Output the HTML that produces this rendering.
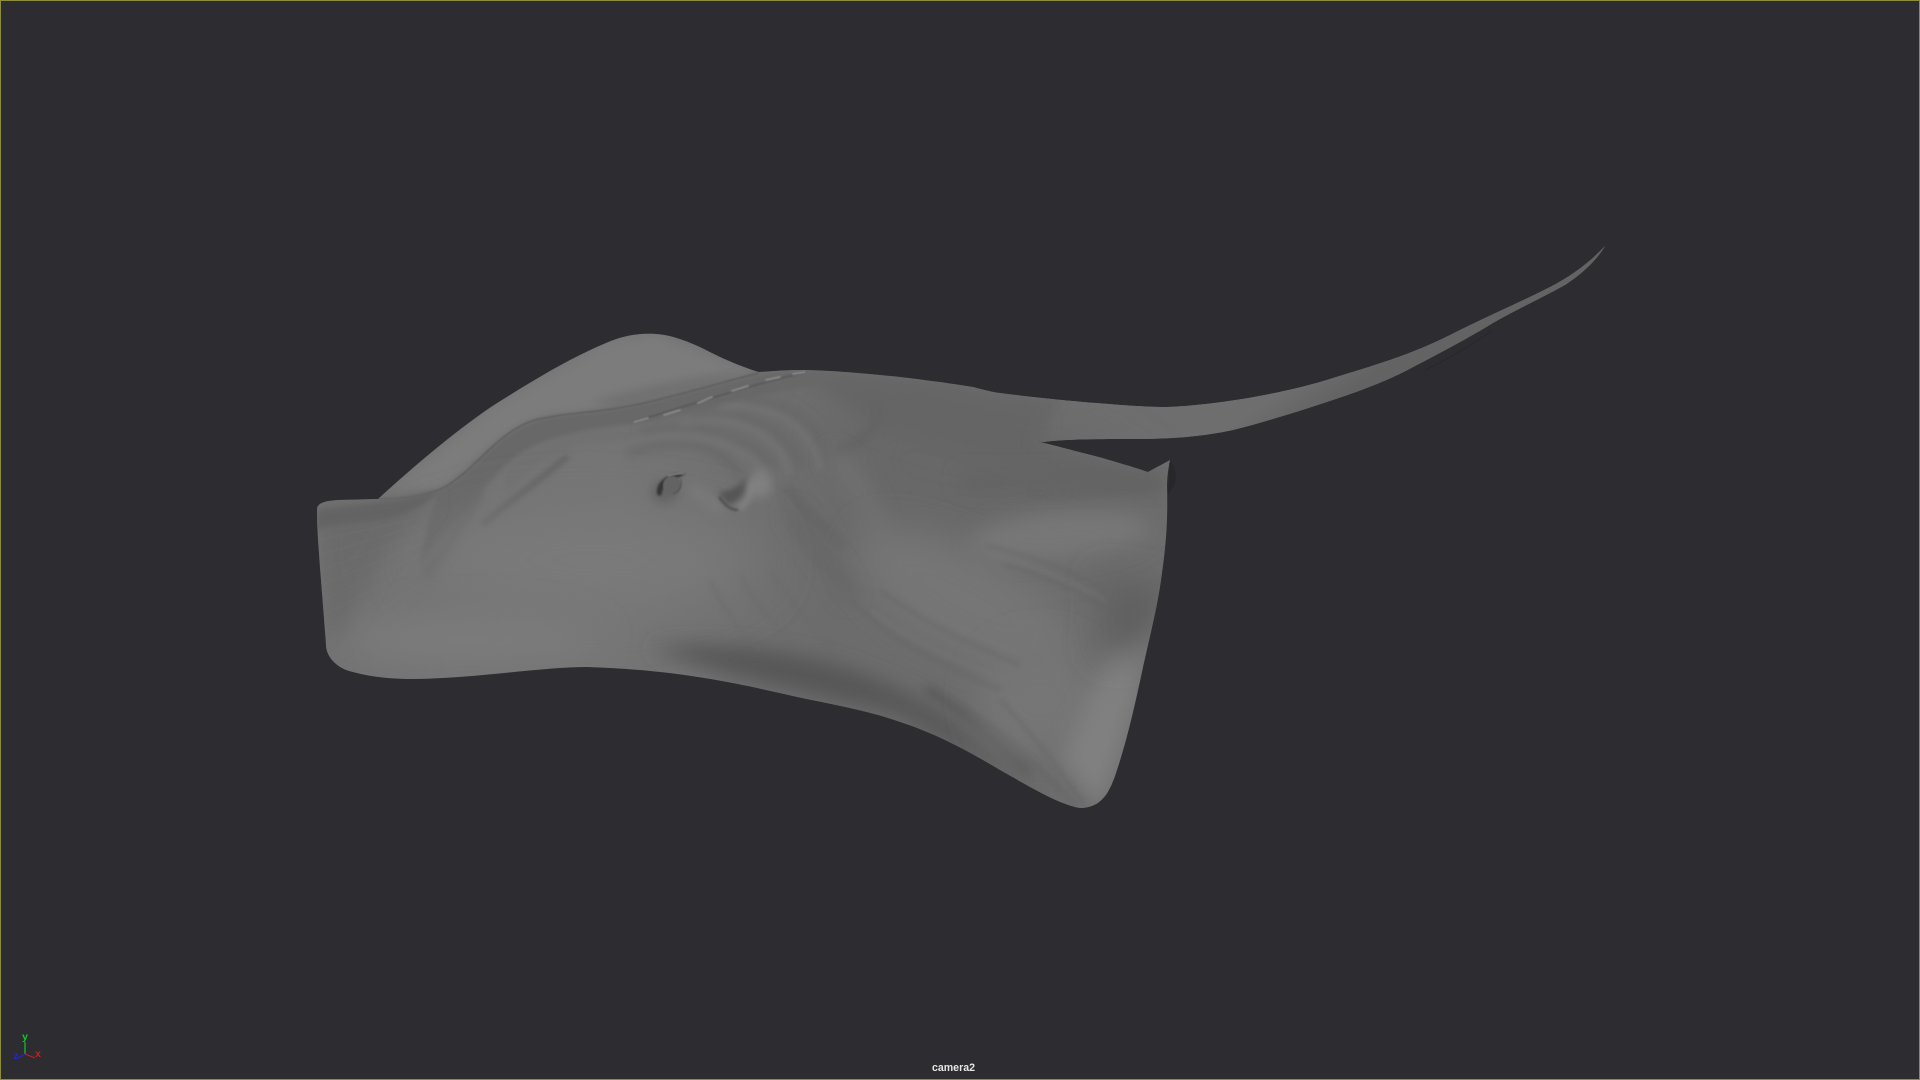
<!DOCTYPE html>
<html><head><meta charset="utf-8"><title>camera2</title>
<style>
html,body{margin:0;padding:0;width:1920px;height:1080px;overflow:hidden;background:#2c2c31}
svg{position:absolute;left:0;top:0;display:block}
text{font-family:"Liberation Sans",sans-serif}
</style></head>
<body>
<svg width="1920" height="1080" viewBox="0 0 1920 1080" xmlns="http://www.w3.org/2000/svg">
<defs>
<clipPath id="body"><path id="bp" d="M317 510 C317 504 322 501 338 500 L378 499 C410 470 450 435 491 407 C530 382 570 358 606 343 C625 335 640 333 656 334 C672 335 690 342 706 350 C725 360 745 368 759 372 C775 371 785 370 800 370 C830 370 870 374 900 377 C925 380 955 384 973 387 C985 390 992 392 1000 393 C1030 397 1060 400 1083 402 C1110 404 1140 407 1167 407 C1220 405 1290 392 1333 378 C1375 365 1410 355 1450 335 C1490 315 1525 300 1548 288 C1572 276 1590 262 1605 246 C1598 258 1585 272 1565 285 C1540 299 1515 310 1493 323 C1465 340 1440 353 1417 365 C1390 380 1360 391 1333 400 C1300 411 1265 422 1233 430 C1200 437 1170 439 1133 439 C1100 439 1065 439 1043 442 L1036 441 C1060 447 1075 451 1083 453 C1100 457 1130 466 1148 472 C1155 468 1163 464 1170 460 C1168 470 1167 478 1167 487 C1168 520 1166 545 1162 573 C1158 605 1150 635 1143 667 C1135 705 1127 740 1117 770 C1110 792 1102 808 1080 808 C1060 805 1030 787 1000 770 C970 752 935 733 900 722 C870 711 835 705 797 697 C740 684 680 670 587 667 C540 667 480 678 415 679 C390 679 368 677 346 670 C334 665 326 655 326 645 C324 615 320 570 319 553 C318 540 317 525 317 510 Z"/></clipPath>
<filter id="b30" filterUnits="userSpaceOnUse" x="0" y="0" width="1920" height="1080"><feGaussianBlur stdDeviation="30"/></filter>
<filter id="b18" filterUnits="userSpaceOnUse" x="0" y="0" width="1920" height="1080"><feGaussianBlur stdDeviation="18"/></filter>
<filter id="b10" filterUnits="userSpaceOnUse" x="0" y="0" width="1920" height="1080"><feGaussianBlur stdDeviation="10"/></filter>
<filter id="b5" filterUnits="userSpaceOnUse" x="0" y="0" width="1920" height="1080"><feGaussianBlur stdDeviation="5"/></filter>
<filter id="b3" filterUnits="userSpaceOnUse" x="0" y="0" width="1920" height="1080"><feGaussianBlur stdDeviation="3"/></filter>
<filter id="b2" filterUnits="userSpaceOnUse" x="0" y="0" width="1920" height="1080"><feGaussianBlur stdDeviation="2"/></filter>
<filter id="b1" filterUnits="userSpaceOnUse" x="0" y="0" width="1920" height="1080"><feGaussianBlur stdDeviation="1"/></filter>
<filter id="b05" filterUnits="userSpaceOnUse" x="0" y="0" width="1920" height="1080"><feGaussianBlur stdDeviation=".7"/></filter>
<linearGradient id="base" gradientUnits="userSpaceOnUse" x1="320" y1="0" x2="1170" y2="0">
<stop offset="0" stop-color="#727272"/><stop offset=".35" stop-color="#757575"/><stop offset=".6" stop-color="#6c6c6c"/><stop offset="1" stop-color="#6d6d6d"/>
</linearGradient>
<linearGradient id="tailg" gradientUnits="userSpaceOnUse" x1="1300" y1="380" x2="1320" y2="410">
<stop offset="0" stop-color="#6e6e6e"/><stop offset="1" stop-color="#636363"/>
</linearGradient>
</defs>

<path d="M1170 460 C1175 466 1177 475 1175 484 L1168 495 Z" fill="#27272a"/>
<path d="M1425 370 C1450 358 1475 343 1492 330" fill="none" stroke="#27272b" stroke-width="1"/>

<use href="#bp" fill="url(#base)"/>

<g clip-path="url(#body)">
  <!-- back wing -->
  <path d="M378 499 L491 407 L606 343 L656 334 L759 372 L640 403 L545 418 L490 450 L440 490 Z" fill="#7b7b7b" filter="url(#b5)"/>
  <path d="M590 402 C640 388 700 374 750 372 L700 390 L620 408 Z" fill="#707070" filter="url(#b5)"/>
  <!-- tail -->
  <path d="M1040 395 L1300 375 L1620 235 L1620 270 L1300 425 L1130 450 L1030 450 Z" fill="url(#tailg)"/>
  <path d="M1000 395 C1020 410 1040 430 1040 442 L1060 400 Z" fill="#686868" filter="url(#b5)"/>
  <!-- upper body -->
  <path d="M880 385 C980 395 1040 430 1100 460 C1150 475 1150 520 1150 520 C1080 540 980 560 880 530 C820 500 820 420 880 385 Z" fill="#676767" filter="url(#b30)"/>
  <path d="M800 372 C880 374 980 385 1040 410 L1040 445 L1160 480 L1160 500 C1060 480 960 460 880 430 Z" fill="#656565" filter="url(#b10)"/>
  <!-- ridge band -->
  <path d="M376 502 C395 500 425 497 445 487 C462 477 478 460 491 448 C505 435 525 420 545 418 C565 413 600 413 644 403 C680 395 730 380 759 375 C780 372 800 371 820 372 L820 385 C780 390 720 405 660 420 C620 428 580 432 545 442 C515 452 495 475 470 505 C455 525 440 540 420 565 C425 535 430 510 438 495 C420 503 395 507 376 508 Z" fill="#686868" filter="url(#b3)"/>
  <path d="M378 499 C400 499 425 497 445 487 C462 477 478 460 491 448 C505 435 525 420 545 418 C565 413 600 413 644 403 C680 395 730 380 759 373" fill="none" stroke="#5a5a5a" stroke-width="1.2" filter="url(#b05)"/>
  <!-- groove -->
  <path d="M505 470 C525 450 555 438 590 430 C610 425 640 428 680 425 C650 438 610 445 575 445 C550 455 525 472 505 495 Z" fill="#717171" filter="url(#b3)"/>
  <path d="M482 525 C505 505 540 480 568 456" fill="none" stroke="#606060" stroke-width="5" filter="url(#b3)"/>
  <path d="M480 490 C465 520 445 550 425 575" fill="none" stroke="#686868" stroke-width="10" filter="url(#b5)"/>
  <!-- dorsal arcs -->
  <g fill="none" stroke="#656565" stroke-width="6" filter="url(#b5)">
    <path d="M628 455 C650 443 690 440 715 452 C730 462 738 470 742 478"/>
    <path d="M640 432 C690 418 750 432 775 468"/>
    <path d="M690 416 C735 405 790 425 802 470"/>
    <path d="M745 402 C790 398 825 425 832 470"/>
  </g>
  <g fill="none" stroke="#747474" stroke-width="5" filter="url(#b3)" opacity=".8">
    <path d="M630 442 C680 428 745 440 765 475"/>
    <path d="M680 424 C730 412 780 430 790 475"/>
    <path d="M720 408 C770 400 812 425 820 470"/>
  </g>
  <path d="M877 403 C885 425 860 445 835 452" fill="none" stroke="#626262" stroke-width="8" filter="url(#b5)"/>
  <path d="M787 487 C805 510 825 530 848 548" fill="none" stroke="#646464" stroke-width="8" filter="url(#b5)"/>
  <path d="M830 455 C850 470 870 500 880 540" fill="none" stroke="#727272" stroke-width="14" filter="url(#b10)"/>
  <!-- dorsal dashes -->
  <g fill="none" stroke-linecap="round">
    <path d="M633 422 C690 405 750 385 806 372" stroke="#5a5a5a" stroke-width="2" filter="url(#b05)"/>
    <path d="M634 422 L648 418 M664 415 L680 410 M698 403 L712 397 M732 391 L748 386 M766 380 L780 377 M793 374 L805 372" stroke="#8c8c8c" stroke-width="1.8" filter="url(#b05)"/>
  </g>
  <!-- face lighter -->
  <ellipse cx="590" cy="560" rx="170" ry="45" fill="#7a7a7a" filter="url(#b30)"/>
  <ellipse cx="470" cy="640" rx="130" ry="26" fill="#7b7b7b" filter="url(#b18)"/>
  <!-- left flap -->
  <path d="M317 505 C340 500 400 500 430 495 C440 505 400 530 380 560 L330 650 L322 600 Z" fill="#6a6a6a" filter="url(#b10)"/>
  <path d="M317 510 L380 503 C400 502 420 497 438 490 C430 505 400 518 370 522 C350 524 330 525 317 530 Z" fill="#646464" filter="url(#b3)"/>
  <g stroke="#7e7e7e" stroke-width="1.2" opacity=".25" fill="none" filter="url(#b05)">
    <path d="M320 540 L410 520 M320 555 L420 525 M321 570 L425 532 M322 585 L430 540 M323 600 L430 550 M324 615 L430 560 M325 630 L425 570 M326 645 L420 585 M330 655 L415 600 M340 668 L420 610"/>
  </g>
  <!-- bottom dark band -->
  <path d="M650 648 C720 640 790 650 840 666 C880 678 930 700 985 745 C1010 765 1030 775 1050 790 C1000 772 960 750 900 716 C840 700 780 688 720 672 Z" fill="#565656" filter="url(#b10)"/>
  <path d="M925 688 C955 705 985 730 1030 772" fill="none" stroke="#585858" stroke-width="9" filter="url(#b5)"/>
  <!-- right wing lights -->
  <ellipse cx="965" cy="600" rx="120" ry="46" transform="rotate(28 965 600)" fill="#767676" filter="url(#b18)"/>
  <ellipse cx="1060" cy="535" rx="90" ry="24" transform="rotate(-5 1060 535)" fill="#777" filter="url(#b10)"/>
  <ellipse cx="1040" cy="700" rx="60" ry="55" fill="#767676" filter="url(#b18)"/>
  <path d="M1100 810 C1120 770 1140 690 1160 610 L1110 650 L1060 760 Z" fill="#808080" filter="url(#b10)"/>
  <!-- right dark patch -->
  <path d="M1095 570 C1125 585 1150 585 1170 585 L1155 640 C1135 655 1115 660 1095 650 C1110 630 1110 600 1095 570 Z" fill="#5e5e5e" filter="url(#b18)"/>
  <path d="M960 480 C1040 485 1110 475 1165 480" stroke="#626262" stroke-width="14" fill="none" filter="url(#b10)"/>
  <g stroke="#636363" stroke-width="3" opacity=".45" fill="none" filter="url(#b2)">
    <path d="M985 545 C1030 555 1070 570 1105 590"/>
    <path d="M1005 565 C1045 575 1075 590 1110 610"/>
    <path d="M1030 495 C1080 498 1120 490 1160 485"/>
    <path d="M880 590 C920 620 960 640 1020 665"/>
    <path d="M850 600 C890 640 930 660 1000 690"/>
    <path d="M960 705 C1000 730 1040 765 1075 805"/>
    <path d="M1000 700 C1030 730 1055 765 1085 805"/>
  </g>
  <g stroke="#7a7a7a" stroke-width="3" opacity=".4" fill="none" filter="url(#b2)">
    <path d="M990 555 C1030 565 1070 580 1105 600"/>
    <path d="M870 610 C910 640 950 660 1010 680"/>
    <path d="M900 590 C940 620 980 640 1040 660"/>
  </g>
  <!-- fan below eye -->
  <g stroke="#6a6a6a" stroke-width="4" opacity=".45" fill="none" filter="url(#b2)">
    <path d="M710 580 C720 605 740 630 760 650"/>
    <path d="M740 575 C755 605 780 630 800 650"/>
    <path d="M770 570 C790 600 815 630 845 660"/>
  </g>
  <path d="M790 510 C810 540 840 570 850 600" fill="none" stroke="#646464" stroke-width="12" filter="url(#b10)"/>
  <!-- eye surround -->
  <path d="M690 488 C705 495 715 505 722 512" fill="none" stroke="#797979" stroke-width="12" filter="url(#b5)"/>
  <ellipse cx="665" cy="492" rx="14" ry="12" fill="#656565" filter="url(#b5)"/>
  <!-- spiracle -->
  <path d="M718 492 C732 492 745 482 750 472 C748 490 742 500 728 505 Z" fill="#555" filter="url(#b3)"/>
  <ellipse cx="760" cy="484" rx="12" ry="14" fill="#808080" filter="url(#b5)"/>
  <path d="M738 508 C748 504 752 494 752 482" fill="none" stroke="#848484" stroke-width="5" filter="url(#b3)"/>
  <path d="M719 497 C725 505 730 510 738 510" fill="none" stroke="#4a4a4a" stroke-width="2" filter="url(#b1)"/>
  <!-- eye -->
  <path d="M657 493 C656 483 665 476 675 474 L686 473 L680 477 C670 479 664 484 662 492 C661 497 658 497 657 493 Z" fill="#343434" filter="url(#b1)"/>
  <circle cx="672" cy="485" r="9" fill="#646464" filter="url(#b05)"/>
  <path d="M668 476 C674 474 679 474 684 473" fill="none" stroke="#9a9a9a" stroke-width="1" filter="url(#b05)"/>
  <path d="M681 479 C682 487 679 492 673 494" fill="none" stroke="#4f4f4f" stroke-width="1" filter="url(#b05)"/>
</g>

<g fill="none" stroke-width="1.2">
  <path d="M25 1054 L25 1042" stroke="#15c72a"/>
  <path d="M25 1054 L35 1058" stroke="#c42020"/>
  <path d="M25 1054 L18 1058" stroke="#2525cc"/>
</g>
<text x="25" y="1040" font-size="10.5" font-weight="700" fill="#15c72a" text-anchor="middle">y</text>
<text x="38" y="1057" font-size="10.5" font-weight="700" fill="#c42020" text-anchor="middle">x</text>
<text x="16" y="1059" font-size="10.5" font-weight="700" fill="#2525cc" text-anchor="middle">z</text>

<text x="953.5" y="1071" font-size="10.6" font-weight="700" fill="#e6e6e6" text-anchor="middle">camera2</text>

<rect x=".5" y=".5" width="1919" height="1079" fill="none" stroke="#8d8d3c" stroke-width="1"/>
</svg>
</body></html>
